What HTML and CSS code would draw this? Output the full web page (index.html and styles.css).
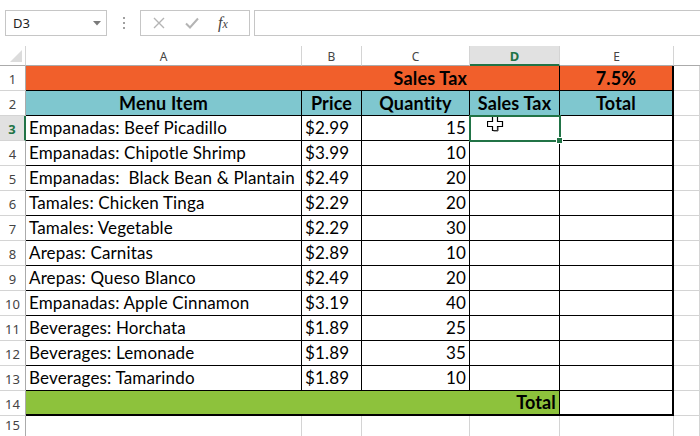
FILE: index.html
```html
<!DOCTYPE html>
<html>
<head>
<meta charset="utf-8">
<link rel="stylesheet" href="styles.css">
</head>
<body>
<div class="app">
  <div class="fbar">
    <div class="namebox"><span class="nb-text">D3</span><svg class="nb-arrow" width="8" height="5" viewBox="0 0 8 5"><path d="M0 0H8L4 4.5Z" fill="#7a7a7a"/></svg></div>
    <svg class="grip" width="4" height="16" viewBox="0 0 4 16"><rect x="1" y="2" width="2" height="2" fill="#a0a0a0"/><rect x="1" y="7" width="2" height="2" fill="#a0a0a0"/><rect x="1" y="12" width="2" height="2" fill="#a0a0a0"/></svg>
    <div class="fxbox">
      <svg class="ico" width="12" height="12" viewBox="0 0 12 12"><path d="M1 1L11 11M11 1L1 11" stroke="#b4b4b4" stroke-width="1.4" fill="none"/></svg>
      <svg class="ico" width="14" height="12" viewBox="0 0 14 12"><path d="M1 6.5L5 10.5L13 1.5" stroke="#b4b4b4" stroke-width="2" fill="none"/></svg>
      <span class="fx">f<span class="fxx">x</span></span>
    </div>
    <div class="formula"></div>
  </div>

  <div class="sheet">
    <div class="corner"><svg width="14" height="14" viewBox="0 0 14 14"><path d="M13 1V13H1Z" fill="#dcdcdc"/></svg></div>
    <div class="ch">A</div>
    <div class="ch">B</div>
    <div class="ch">C</div>
    <div class="ch ch-active">D</div>
    <div class="ch">E</div>
    <div class="ch ch-last"></div>

    <div class="rh">1</div>
    <div class="c orange span3 right bold">Sales Tax</div>
    <div class="c orange"></div>
    <div class="c orange e center bold">7.5%</div>
    <div class="g"></div>

    <div class="rh">2</div>
    <div class="c teal center bold">Menu Item</div>
    <div class="c teal center bold">Price</div>
    <div class="c teal center bold">Quantity</div>
    <div class="c teal center bold">Sales Tax</div>
    <div class="c teal e center bold">Total</div>
    <div class="g"></div>

    <div class="rh rh-active">3</div>
    <div class="c">Empanadas: Beef Picadillo</div>
    <div class="c">$2.99</div>
    <div class="c right">15</div>
    <div class="c sel"><span class="fill-handle"></span></div>
    <div class="c e"></div>
    <div class="g"></div>

    <div class="rh">4</div>
    <div class="c">Empanadas: Chipotle Shrimp</div>
    <div class="c">$3.99</div>
    <div class="c right">10</div>
    <div class="c"></div>
    <div class="c e"></div>
    <div class="g"></div>

    <div class="rh">5</div>
    <div class="c pre">Empanadas:  Black Bean &amp; Plantain</div>
    <div class="c">$2.49</div>
    <div class="c right">20</div>
    <div class="c"></div>
    <div class="c e"></div>
    <div class="g"></div>

    <div class="rh">6</div>
    <div class="c">Tamales: Chicken Tinga</div>
    <div class="c">$2.29</div>
    <div class="c right">20</div>
    <div class="c"></div>
    <div class="c e"></div>
    <div class="g"></div>

    <div class="rh">7</div>
    <div class="c">Tamales: Vegetable</div>
    <div class="c">$2.29</div>
    <div class="c right">30</div>
    <div class="c"></div>
    <div class="c e"></div>
    <div class="g"></div>

    <div class="rh">8</div>
    <div class="c">Arepas: Carnitas</div>
    <div class="c">$2.89</div>
    <div class="c right">10</div>
    <div class="c"></div>
    <div class="c e"></div>
    <div class="g"></div>

    <div class="rh">9</div>
    <div class="c">Arepas: Queso Blanco</div>
    <div class="c">$2.49</div>
    <div class="c right">20</div>
    <div class="c"></div>
    <div class="c e"></div>
    <div class="g"></div>

    <div class="rh">10</div>
    <div class="c">Empanadas: Apple Cinnamon</div>
    <div class="c">$3.19</div>
    <div class="c right">40</div>
    <div class="c"></div>
    <div class="c e"></div>
    <div class="g"></div>

    <div class="rh">11</div>
    <div class="c">Beverages: Horchata</div>
    <div class="c">$1.89</div>
    <div class="c right">25</div>
    <div class="c"></div>
    <div class="c e"></div>
    <div class="g"></div>

    <div class="rh">12</div>
    <div class="c">Beverages: Lemonade</div>
    <div class="c">$1.89</div>
    <div class="c right">35</div>
    <div class="c"></div>
    <div class="c e"></div>
    <div class="g"></div>

    <div class="rh">13</div>
    <div class="c">Beverages: Tamarindo</div>
    <div class="c">$1.89</div>
    <div class="c right">10</div>
    <div class="c"></div>
    <div class="c e"></div>
    <div class="g"></div>

    <div class="rh">14</div>
    <div class="c green span4 right bold last">Total</div>
    <div class="c e last"></div>
    <div class="g"></div>

    <div class="rh">15</div>
    <div class="g"></div>
    <div class="g"></div>
    <div class="g"></div>
    <div class="g"></div>
    <div class="g"></div>
    <div class="g"></div>
  </div>

  <svg class="cursor" width="17" height="16" viewBox="0 0 17 16"><path d="M5.5 0.5H10.5V5.5H15.5V10.5H10.5V14.5H5.5V10.5H0.5V5.5H5.5Z" fill="#fff" stroke="#000" stroke-width="1.2"/><path d="M11 11V15H6.5" stroke="#555" stroke-width="1" fill="none"/></svg>
</div>
</body>
</html>
```

FILE: styles.css
```css
html, body {
  margin: 0;
  padding: 0;
  background: #fff;
  overflow: hidden;
}

.app {
  position: relative;
  width: 700px;
  height: 436px;
  overflow: hidden;
  font-family: "Noto Sans", "DejaVu Sans", sans-serif;
}

/* formula bar */
.fbar {
  box-sizing: border-box;
  height: 46px;
  padding: 10px 0 0 5px;
  display: flex;
  align-items: flex-start;
}

.namebox {
  box-sizing: border-box;
  width: 102px;
  height: 26px;
  border: 1px solid #c6c6c6;
  display: flex;
  align-items: center;
  justify-content: space-between;
  padding: 0 5px 0 7px;
  font-size: 13px;
  color: #222;
}

.nb-text {
  line-height: 1;
}

.grip {
  margin: 5px 0 0 15px;
}

.fxbox {
  box-sizing: border-box;
  margin-left: 14px;
  width: 110px;
  height: 26px;
  border: 1px solid #c6c6c6;
  display: flex;
  align-items: center;
  padding: 0 10px 0 12px;
}

.fxbox .ico:nth-child(1) {
  margin-right: 20px;
}

.fxbox .ico:nth-child(2) {
  margin-right: 19px;
}

.fx {
  font-family: "Liberation Serif", serif;
  font-style: italic;
  font-size: 16px;
  color: #444;
  line-height: 1;
}

.fxx {
  font-size: 12px;
}

.formula {
  box-sizing: border-box;
  margin-left: 4px;
  flex: 1;
  margin-right: -4px;
  height: 26px;
  border: 1px solid #c6c6c6;
}

/* sheet grid */
.sheet {
  display: grid;
  grid-template-columns: 26px 276px 60px 108px 90px 114px 1fr;
  grid-template-rows: 20px repeat(14, 25px) 1fr;
  height: 390px;
  font-family: Lato, "Open Sans", sans-serif;
  font-size: 17px;
  letter-spacing: 0.15px;
  color: #000;
}

.corner {
  box-sizing: border-box;
  border-right: 1px solid #d4d4d4;
  border-bottom: 1px solid #ababab;
  display: flex;
  align-items: flex-end;
  justify-content: flex-end;
  padding: 0 2px 2px 0;
}

.ch {
  box-sizing: border-box;
  border-right: 1px solid #d4d4d4;
  border-bottom: 1px solid #ababab;
  font-family: "Noto Sans", sans-serif;
  font-size: 12px;
  letter-spacing: 0;
  color: #444;
  display: flex;
  align-items: center;
  justify-content: center;
  padding-top: 1px;
}

.ch-active {
  background: #e1e1e1;
  color: #217346;
  font-weight: bold;
  font-size: 13px;
  border-bottom: 2px solid #217346;
}

.ch-last {
  border-right: none;
}

.rh {
  box-sizing: border-box;
  border-right: 1px solid #ababab;
  border-bottom: 1px solid #d4d4d4;
  font-family: "Noto Sans", sans-serif;
  font-size: 13px;
  letter-spacing: 0;
  color: #444;
  display: flex;
  align-items: flex-end;
  justify-content: center;
  padding-bottom: 2px;
}

.rh-active {
  background: #e1e1e1;
  color: #217346;
  font-weight: bold;
  border-right: 2px solid #217346;
}

.c {
  box-sizing: border-box;
  border-right: 1px solid #000;
  border-bottom: 1px solid #000;
  display: flex;
  align-items: flex-end;
  padding: 0 3px 1px 3px;
  line-height: 22px;
  white-space: nowrap;
  position: relative;
}

.pre {
  white-space: pre;
}

.g {
  box-sizing: border-box;
  border-right: 1px solid #d4d4d4;
  border-bottom: 1px solid #d4d4d4;
}

.e {
  border-right: 2px solid #000;
}

.last {
  border-bottom: 2px solid #000;
}

.right {
  justify-content: flex-end;
}

.center {
  justify-content: center;
}

.bold {
  font-weight: bold;
  font-size: 18px;
}

.span3 {
  grid-column: span 3;
  border-right: none;
}

.span4 {
  grid-column: span 4;
}

.orange {
  background: #f15f2b;
}

.teal {
  background: #7fc7cf;
}

.green {
  background: #8dc23c;
}

.sel {
  outline: 2px solid #217346;
  outline-offset: -1px;
  z-index: 2;
}

.fill-handle {
  position: absolute;
  right: -4px;
  bottom: -4px;
  width: 5px;
  height: 5px;
  background: #217346;
  border: 1px solid #fff;
}

.cursor {
  position: absolute;
  left: 487px;
  top: 116px;
}
```
